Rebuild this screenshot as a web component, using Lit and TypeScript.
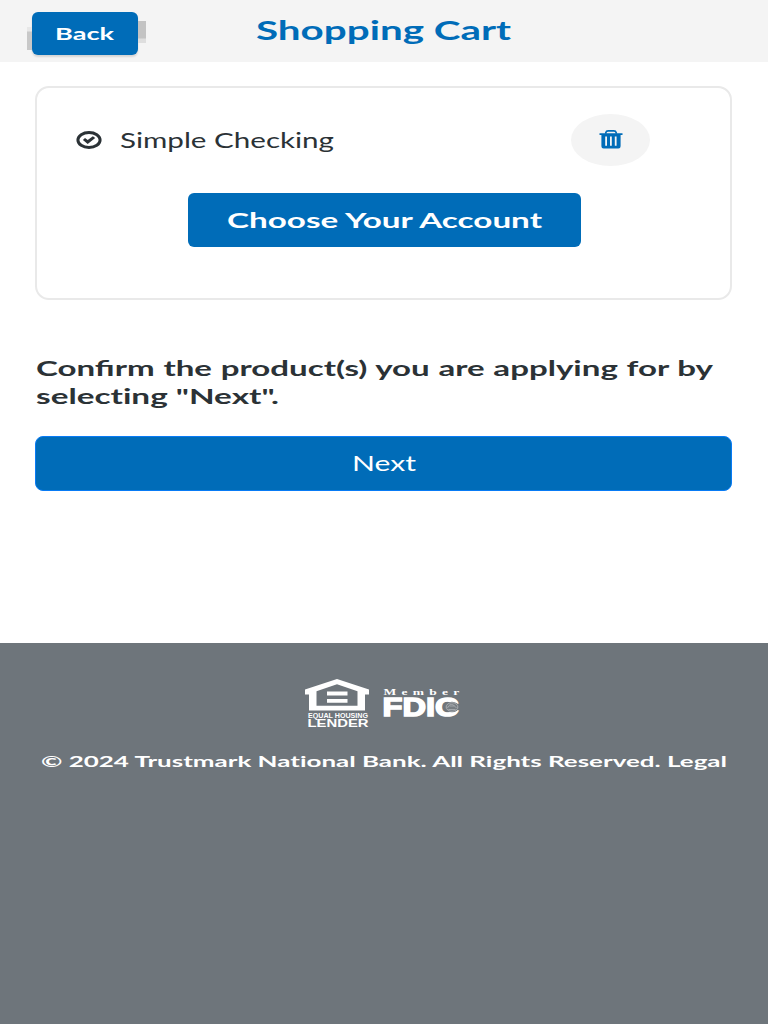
import { html, css, svg, LitElement } from "lit";
import { customElement, property } from "lit/decorators.js";

// One line of text, drawn out horizontally to a fixed width.
@customElement("wide-text")
export class WideText extends LitElement {
  static styles = css`
    :host {
      display: block;
      line-height: 0;
    }

    svg {
      display: block;
      overflow: visible;
    }

    text {
      fill: currentColor;
      font-family: inherit;
      font-weight: inherit;
      font-variant-ligatures: none;
    }

    :host([ligatures]) text {
      font-variant-ligatures: normal;
      word-spacing: 0.4px;
    }
  `;

  @property({ type: String }) text = "";
  @property({ type: Number }) size = 20;
  @property({ type: Number }) width = 100;
  @property({ type: Number }) height = 28;
  @property({ type: Number }) baseline = 20;

  render() {
    return html`
      <svg width=${this.width} height=${this.height}>
        <text
          x="0"
          y=${this.baseline}
          font-size=${this.size}
          textLength=${this.width}
          lengthAdjust="spacingAndGlyphs"
        >${this.text}</text>
      </svg>
    `;
  }
}

const checkIcon = html`
  <svg class="check" viewBox="0 0 26 18" width="26" height="18">
    <ellipse cx="13" cy="9" rx="11.1" ry="7.5" fill="none" stroke="currentColor" stroke-width="3" />
    <path d="M6.9 8.9 L9 7 L11.7 9.1 L16.9 5.2 L19.2 7.1 L11.7 13.1 Z" fill="currentColor" />
  </svg>
`;

const trashIcon = html`
  <svg viewBox="0 0 24 19" width="24" height="19">
    <path d="M6.8 3.8 V2.6 Q7.2 .9 9.2 .9 H14.8 Q16.8 .9 17.2 2.6 V3.8" fill="none" stroke="currentColor" stroke-width="1.7" />
    <path
      fill="currentColor"
      fill-rule="evenodd"
      d="M.5 3.2 H23.5 V4.9 H21.6 V16.2 Q21.6 18.4 19.4 18.4 H4.6 Q2.4 18.4 2.4 16.2 V4.9 H.5 Z
         M6.2 6.4 V15.8 H8 V6.4 Z M11 6.4 V15.8 H12.8 V6.4 Z M15.8 6.4 V15.8 H17.6 V6.4 Z"
    />
  </svg>
`;

const houseShape = svg`
  <path
    fill="currentColor"
    fill-rule="evenodd"
    d="M32 0 L64 10.6 V15.6 H60 V31.6 H4 V15.6 H0 V10.6 Z
       M32 5.2 L11.5 12.2 V26.8 H52.5 V12.2 Z"
  />
  <path fill="currentColor" d="M22 12.5 H42.5 V16.4 H22 Z M22 20 H42.5 V23.8 H22 Z" />
`;

@customElement("app-root")
export class AppRoot extends LitElement {
  static styles = css`
    :host {
      display: flex;
      flex-direction: column;
      height: 1024px;
      overflow: hidden;
      background: #fff;
      color: #2b3236;
      font-family: Lato, "Liberation Sans", sans-serif;
    }

    * {
      box-sizing: border-box;
    }

    button {
      display: flex;
      justify-content: center;
      padding: 0;
      border: 0;
      background: #006cb8;
      color: #fff;
      font-family: inherit;
      font-weight: 700;
      cursor: pointer;
    }

    header {
      display: grid;
      grid-template-columns: 1fr auto 1fr;
      height: 62px;
      padding: 0 33px 0 32px;
      background: #f4f4f4;
    }

    .back {
      position: relative;
      width: 106px;
      height: 43px;
      margin-top: 12px;
      padding-right: 1px;
      border-radius: 6px;
      box-shadow: 0 2px 2px rgba(0, 0, 0, 0.13);
    }

    .back:before,
    .back:after {
      content: "";
      position: absolute;
    }

    .back:before {
      left: -5px;
      top: 15px;
      width: 5px;
      height: 23px;
      background: linear-gradient(#e7e7e7 0 4px, #c8c8c8 5px 100%);
    }

    .back:after {
      right: -8px;
      top: 9px;
      width: 8px;
      height: 22px;
      background: linear-gradient(#c3c3c3 0 17px, #dedede 18px 100%);
    }

    .title {
      color: #006cb8;
      font-weight: 700;
    }

    main {
      display: flex;
      flex-direction: column;
      height: 581px;
      padding: 24px 36px 0 35px;
    }

    .card {
      display: flex;
      flex-direction: column;
      height: 214px;
      padding: 26px 80px 0 39px;
      border: 2px solid #e9e9e9;
      border-radius: 14px;
    }

    .product {
      display: flex;
      align-items: center;
      height: 52px;
    }

    .check {
      margin-right: 18px;
    }

    .name {
      flex: 1;
    }

    .remove {
      align-items: center;
      width: 79px;
      height: 52px;
      border-radius: 50%;
      background: #f4f4f4;
      color: #006cb8;
    }

    .remove svg {
      margin-bottom: 2px;
    }

    .choose {
      width: 393px;
      height: 54px;
      margin: 27px 0 0 111.5px;
      border-radius: 6px;
    }

    .confirm {
      height: 57px;
      margin: 55px 0 24px 0.5px;
      font-weight: 700;
    }

    .next {
      height: 55px;
      border: 1px solid #087bf5;
      border-radius: 8px;
      font-weight: 400;
    }

    footer {
      display: flex;
      flex: 1;
      flex-direction: column;
      align-items: center;
      padding-top: 36px;
      background: #6e757b;
      color: #fff;
      font-weight: 700;
    }

    .logos {
      display: flex;
      gap: 14px;
      width: 158px;
      height: 49px;
      margin-bottom: 19px;
    }

    .logos text {
      fill: currentColor;
      font-family: "Liberation Sans", Arial, sans-serif;
      font-weight: 700;
    }

    .logos .serif {
      font-family: "Liberation Serif", serif;
    }
  `;

  renderLogos() {
    return html`
      <div class="logos">
        <svg viewBox="0 0 64 49" width="64" height="49">
          ${houseShape}
          <text x="3" y="38.8" font-size="6.8" textLength="60" lengthAdjust="spacingAndGlyphs">EQUAL HOUSING</text>
          <text x="2.5" y="47.7" font-size="10.6" textLength="61" lengthAdjust="spacingAndGlyphs">LENDER</text>
        </svg>
        <svg viewBox="0 0 80 49" width="80" height="49">
          <g transform="translate(.5 15.8) scale(1.5 1)">
            <text class="serif" x="0" y="0" font-size="9" textLength="50.5" lengthAdjust="spacing">Member</text>
          </g>
          <text x="-.5" y="37.4" font-size="26" stroke="currentColor" stroke-width="1.5" textLength="76" lengthAdjust="spacingAndGlyphs">FDIC</text>
          <ellipse cx="69" cy="28" rx="7" ry="5.3" fill="#777d82" />
          <ellipse cx="69" cy="28" rx="5.8" ry="4.3" fill="none" stroke="#b4b8bb" stroke-width=".7" />
          <path d="M64.5 29 Q66.5 24 70.5 26 L73.5 29 M65.5 30.5 H72.5 M66.5 27 H71.5" fill="none" stroke="#b4b8bb" stroke-width=".7" />
        </svg>
      </div>
    `;
  }

  render() {
    return html`
      <header>
        <button class="back">
          <wide-text text="Back" size="16.3" width="59" height="43" baseline="27.7"></wide-text>
        </button>
        <wide-text class="title" text="Shopping Cart" size="26" width="255" height="62" baseline="40"></wide-text>
      </header>
      <main>
        <section class="card">
          <div class="product">
            ${checkIcon}
            <wide-text class="name" text="Simple Checking" size="21" width="214" height="52" baseline="33.5"></wide-text>
            <button class="remove" aria-label="Remove">${trashIcon}</button>
          </div>
          <button class="choose">
            <wide-text text="Choose Your Account" size="20.6" width="315" height="54" baseline="34.5"></wide-text>
          </button>
        </section>
        <div class="confirm">
          <wide-text ligatures text="Confirm the product(s) you are applying for by" size="20.6" width="677" height="28.5" baseline="20.7"></wide-text>
          <wide-text text='selecting "Next".' size="20.6" width="243" height="28.5" baseline="20.4"></wide-text>
        </div>
        <button class="next">
          <wide-text text="Next" size="20.6" width="64" height="53" baseline="34.2"></wide-text>
        </button>
      </main>
      <footer>
        ${this.renderLogos()}
        <wide-text text="© 2024 Trustmark National Bank. All Rights Reserved. Legal" size="15.5" width="686" height="28" baseline="20"></wide-text>
      </footer>
    `;
  }
}
